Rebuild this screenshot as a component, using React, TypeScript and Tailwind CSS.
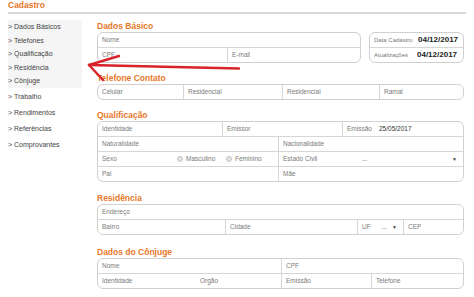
import React from "react";

const orange = "text-[#e8782a]";
const cell = "h-[14px] pl-[4px] text-[6.5px] leading-[14px] text-[#7a7a7a] whitespace-nowrap overflow-hidden";
const row = "flex border-t border-[#d6d6d6] first:border-t-0";
const box = "rounded-[6px] border border-[#d0d0d0] bg-white";

const Title = ({ children, className = "" }: { children: React.ReactNode; className?: string }) => (
  <h2 className={`h-[11px] text-[8.5px] font-bold leading-[11px] ${orange} ${className}`}>{children}</h2>
);

const Radio = ({ label }: { label: string }) => (
  <span className="flex items-center gap-[3px]">
    <span className="inline-block h-[6px] w-[6px] rounded-full border border-[#c4c4c4] bg-[#e6e6e6]" />
    {label}
  </span>
);

const Select = ({ className = "" }: { className?: string }) => (
  <span className={`flex items-center justify-between text-[#555] ${className}`}>
    <span>...</span>
    <span className="text-[5px] text-[#444]">▼</span>
  </span>
);

const sideTop = ["Dados Básicos", "Telefones", "Qualificação", "Residência", "Cônjuge"];
const sideBottom = ["Trabalho", "Rendimentos", "Referências", "Comprovantes"];

export default function App() {
  return (
    <div className="relative h-[297px] w-[474px] overflow-hidden bg-white" style={{ fontFamily: '"Liberation Sans", Arial, sans-serif' }}>
      {/* header */}
      <div className="mx-[8px] border-b-2 border-[#d9d9d9] pb-[1px]">
        <h1 className={`text-[8.5px] font-bold leading-[11px] ${orange}`}>Cadastro</h1>
      </div>

      <div className="flex">
        {/* sidebar */}
        <div className="ml-[8px] mt-[6px] w-[74px]">
          <div className="bg-[#f5f5f5]">
            {sideTop.map((s) => (
              <div key={s} className="h-[13.6px] text-[7px] leading-[13.6px] text-[#444]">&gt; {s}</div>
            ))}
          </div>
          <div className="mt-[1px]">
            {sideBottom.map((s) => (
              <div key={s} className="h-[16px] text-[7px] leading-[16px] text-[#444]">&gt; {s}</div>
            ))}
          </div>
        </div>

        {/* main */}
        <div className="ml-[15px] mt-[7px] w-[367px]">
          <Title>Dados Básico</Title>
          <div className="flex gap-[8px]">
            <div className={`${box} w-[264px]`}>
              <div className={row}><div className={cell}>Nome</div></div>
              <div className={row}>
                <div className={`${cell} w-[130px] border-r border-[#d6d6d6]`}>CPF</div>
                <div className={cell}>E-mail</div>
              </div>
            </div>
            <div className={`${box} flex-1`}>
              <div className={row}>
                <div className={`${cell} w-[48px] text-[6px]`}>Data Cadastro</div>
                <div className="text-[8px] font-bold leading-[14px] text-[#222]">04/12/2017</div>
              </div>
              <div className={row}>
                <div className={`${cell} w-[47px] text-[6px]`}>Atualizações</div>
                <div className="text-[8px] font-bold leading-[14px] text-[#222]">04/12/2017</div>
              </div>
            </div>
          </div>

          <Title className="mt-[10px]">Telefone Contato</Title>
          <div className={box}>
            <div className={row}>
              <div className={`${cell} w-[86px] border-r border-[#d6d6d6]`}>Celular</div>
              <div className={`${cell} w-[99px] border-r border-[#d6d6d6]`}>Residencial</div>
              <div className={`${cell} w-[97px] border-r border-[#d6d6d6]`}>Residencial</div>
              <div className={cell}>Ramal</div>
            </div>
          </div>

          <Title className="mt-[10px]">Qualificação</Title>
          <div className={box}>
            <div className={row}>
              <div className={`${cell} w-[125px] border-r border-[#d6d6d6]`}>Identidade</div>
              <div className={`${cell} w-[120px] border-r border-[#d6d6d6]`}>Emissor</div>
              <div className={`${cell} flex`}>
                <span className="w-[32px]">Emissão</span>
                <span className="text-[#333]">25/05/2017</span>
              </div>
            </div>
            <div className={row}>
              <div className={`${cell} w-[181px] border-r border-[#d6d6d6]`}>Naturalidade</div>
              <div className={cell}>Nacionalidade</div>
            </div>
            <div className={row}>
              <div className={`${cell} flex w-[181px] border-r border-[#d6d6d6]`}>
                <span className="w-[75px]">Sexo</span>
                <span className="w-[49px]"><Radio label="Masculino" /></span>
                <Radio label="Feminino" />
              </div>
              <div className={`${cell} flex flex-1 pr-[6px]`}>
                <span className="w-[79px]">Estado Civil</span>
                <Select className="flex-1" />
              </div>
            </div>
            <div className={row}>
              <div className={`${cell} w-[181px] border-r border-[#d6d6d6]`}>Pai</div>
              <div className={cell}>Mãe</div>
            </div>
          </div>

          <Title className="mt-[11px]">Residência</Title>
          <div className={box}>
            <div className={row}><div className={cell}>Endereço</div></div>
            <div className={row}>
              <div className={`${cell} w-[128px] border-r border-[#d6d6d6]`}>Bairro</div>
              <div className={`${cell} w-[132px] border-r border-[#d6d6d6]`}>Cidade</div>
              <div className={`${cell} flex w-[46px] border-r border-[#d6d6d6] pr-[6px]`}>
                <span className="w-[20px]">UF</span>
                <Select className="flex-1" />
              </div>
              <div className={cell}>CEP</div>
            </div>
          </div>

          <Title className="mt-[12px]">Dados do Cônjuge</Title>
          <div className={box}>
            <div className={row}>
              <div className={`${cell} w-[184px] border-r border-[#d6d6d6]`}>Nome</div>
              <div className={cell}>CPF</div>
            </div>
            <div className={row}>
              <div className={`${cell} w-[98px]`}>Identidade</div>
              <div className={`${cell} w-[86px] border-r border-[#d6d6d6]`}>Orgão</div>
              <div className={`${cell} w-[90px] border-r border-[#d6d6d6]`}>Emissão</div>
              <div className={cell}>Telefone</div>
            </div>
          </div>
        </div>
      </div>

      {/* red annotation arrow */}
      <svg className="pointer-events-none absolute left-0 top-0" width="474" height="297" viewBox="0 0 474 297">
        <g stroke="#d8232a" strokeWidth="2.4" strokeLinecap="round" fill="none">
          <path d="M239 68.5 L89 65" />
          <path d="M89 65 L119 56" />
          <path d="M89 65 L103 80" />
        </g>
      </svg>
    </div>
  );
}
